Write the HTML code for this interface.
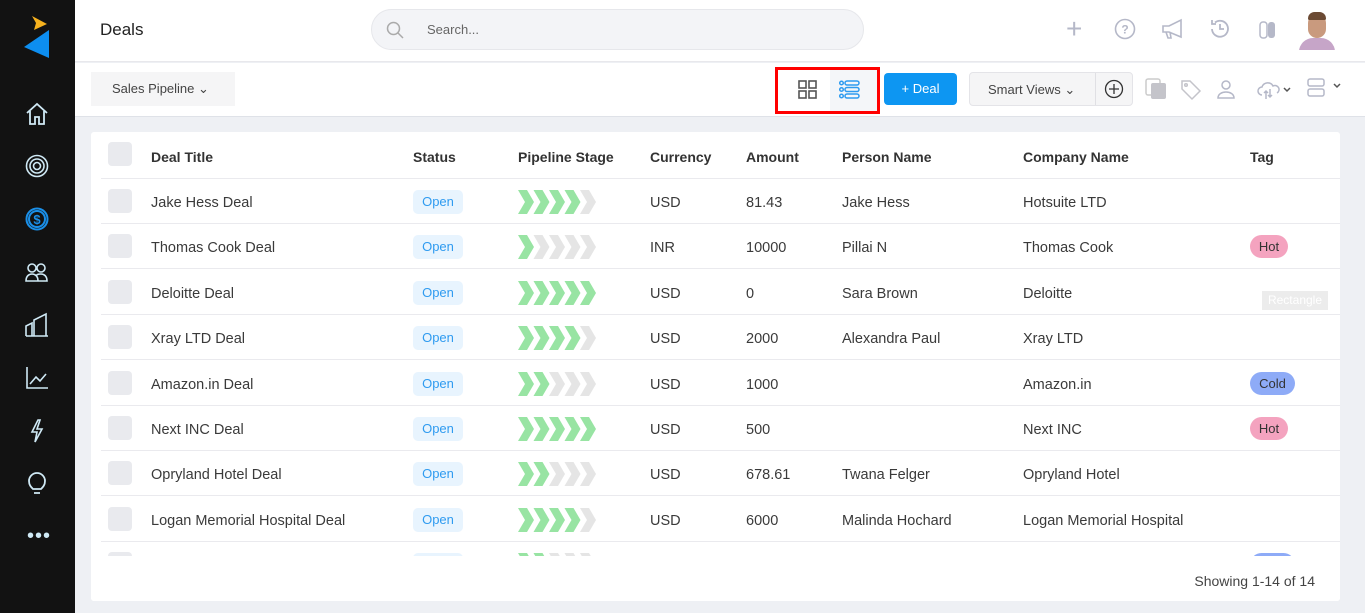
<!DOCTYPE html>
<html><head><meta charset="utf-8"><style>
*{box-sizing:border-box;margin:0;padding:0}
body{width:1365px;height:613px;overflow:hidden;font-family:"Liberation Sans",sans-serif;background:#eef0f4;position:relative;color:#333}
.sb{position:absolute;left:0;top:0;width:75px;height:613px;background:#121212}
.sb svg{position:absolute;left:24px}
.hdr{position:absolute;left:75px;top:0;right:0;height:62px;background:#fff;border-bottom:1px solid #e8e8ec}
.tb{position:absolute;left:75px;top:63px;right:0;height:54px;background:#fff;border-bottom:1px solid #dfe2e8}
.card{position:absolute;left:91px;top:132px;width:1249px;height:469px;background:#fff;border-radius:3px;overflow:hidden}
.row{position:absolute;left:10px;width:1239px;height:45px;border-bottom:1px solid #eaeaee;font-size:14.5px;color:#3a3a3a}
.row span{position:absolute;top:16px}
.cb{position:absolute;left:7px;top:10px;width:24px;height:24px;background:#e9eaee;border-radius:4px}
.st{position:absolute;left:312px;top:11px;width:50px;height:24px;background:#e8f4fe;border-radius:5px;color:#2f9bf0;font-size:13px;text-align:center;line-height:24px}
.pipe{position:absolute;left:417px;top:11px}
.tag{position:absolute;top:11px;height:23px;border-radius:12px;font-size:13px;line-height:23px;text-align:center;color:#333}
.th span{font-weight:bold;font-size:14px;color:#333}
</style></head><body>
<div class="sb">
<svg style="left:22px;top:14px" width="30" height="46" viewBox="0 0 30 46"><polygon points="10,2 25,10 12,16 14,9" fill="#f7b21e"/><polygon points="27,16 27,44 2,33" fill="#0d8ef0"/></svg>
<svg style="top:101px" width="26" height="26" viewBox="0 0 26 26" fill="none" stroke="#cfe9f5" stroke-width="1.8"><path d="M3 12L13 3l10 9M6 10v13h5v-7h4v7h5V10"/></svg>
<svg style="top:153px" width="26" height="26" viewBox="0 0 26 26" fill="none" stroke="#cfe9f5" stroke-width="1.6"><circle cx="13" cy="13" r="10.5"/><circle cx="13" cy="13" r="7"/><circle cx="13" cy="13" r="3.5"/></svg>
<svg style="top:206px" width="26" height="26" viewBox="0 0 26 26" fill="none" stroke="#1a8fe8" stroke-width="2"><circle cx="13" cy="13" r="10.5"/><circle cx="13" cy="13" r="8"/><text x="13" y="18" font-size="13" text-anchor="middle" fill="#1a8fe8" stroke="none" font-family="Liberation Sans" font-weight="bold">$</text></svg>
<svg style="top:259px" width="26" height="26" viewBox="0 0 26 26" fill="none" stroke="#cfe9f5" stroke-width="1.6"><circle cx="8" cy="9" r="4"/><circle cx="17" cy="9" r="4"/><path d="M2 22c0-5 3-7 6-7s6 2 6 7zM12 17c1-2 3-2 5-2 3 0 6 2 6 7H13"/></svg>
<svg style="top:312px" width="26" height="26" viewBox="0 0 26 26" fill="none" stroke="#cfe9f5" stroke-width="1.6"><path d="M2 24V14l6-3v13M10 24V8l12-6v22M2 24h22"/></svg>
<svg style="top:365px" width="26" height="26" viewBox="0 0 26 26" fill="none" stroke="#cfe9f5" stroke-width="1.6"><path d="M3 2v21h21M6 19l6-7 4 4 6-7"/></svg>
<svg style="top:418px" width="26" height="26" viewBox="0 0 26 26" fill="none" stroke="#cfe9f5" stroke-width="1.6"><path d="M14 2L8 14h5l-2 10 7-13h-5l3-9z"/></svg>
<svg style="top:471px" width="26" height="26" viewBox="0 0 26 26" fill="none" stroke="#cfe9f5" stroke-width="1.8"><path d="M9 18c-2-2-4-4-4-8a8 8 0 0116 0c0 4-2 6-4 8zM10 22h6"/></svg>
<div style="position:absolute;left:27px;top:533px;color:#cfe9f5;font-size:20px;letter-spacing:1px;line-height:6px">•••</div>
</div>
<div class="hdr">
<div style="position:absolute;left:25px;top:20px;font-size:17px;color:#222">Deals</div>
<div style="position:absolute;left:296px;top:9px;width:493px;height:41px;background:#f3f4f7;border:1px solid #e6e7eb;border-radius:21px">
<svg style="position:absolute;left:14px;top:11px" width="18" height="18" viewBox="0 0 18 18" fill="none" stroke="#aaa" stroke-width="1.5"><circle cx="7.5" cy="7.5" r="6"/><path d="M12 12l5 5"/></svg>
<span style="position:absolute;left:55px;top:12px;font-size:13px;color:#666">Search...</span></div>
<div style="position:absolute;left:991px;top:14px;font-size:28px;color:#b5b8c8;line-height:30px;font-weight:300">+</div>
<svg style="position:absolute;left:1039px;top:18px" width="22" height="22" viewBox="0 0 22 22" fill="none" stroke="#b5b8c8" stroke-width="1.6"><circle cx="11" cy="11" r="9.5"/><text x="11" y="15.5" font-size="12" text-anchor="middle" fill="#b5b8c8" stroke="none" font-family="Liberation Sans" font-weight="bold">?</text></svg>
<svg style="position:absolute;left:1086px;top:18px" width="24" height="22" viewBox="0 0 24 22" fill="none" stroke="#b5b8c8" stroke-width="1.6"><path d="M2 8h6l12-6v17L8 14H2zM5 14l2 6h3l-1-6"/></svg>
<svg style="position:absolute;left:1134px;top:18px" width="22" height="22" viewBox="0 0 22 22" fill="none" stroke="#b5b8c8" stroke-width="1.8"><path d="M3 11a8 8 0 103-6.5M3 2v4h4M11 6v5h4"/></svg>
<svg style="position:absolute;left:1184px;top:21px" width="17" height="18" viewBox="0 0 17 18"><rect x="1" y="1" width="7" height="16" rx="3" fill="none" stroke="#b5b8c8" stroke-width="1.5"/><rect x="9" y="1" width="7" height="16" rx="3" fill="#b5b8c8"/></svg>
<div style="position:absolute;left:1222px;top:12px;width:40px;height:38px;overflow:hidden;background:#fff">
<div style="position:absolute;left:11px;top:2px;width:18px;height:24px;border-radius:9px;background:#c99a7e"></div>
<div style="position:absolute;left:11px;top:0px;width:18px;height:8px;border-radius:9px 9px 2px 2px;background:#6b4a33"></div>
<div style="position:absolute;left:2px;top:26px;width:36px;height:20px;border-radius:14px 14px 0 0;background:#c6a5c8"></div></div>
</div>
<div class="tb">
<div style="position:absolute;left:16px;top:9px;width:144px;height:34px;background:#f5f5f6;font-size:13px;color:#444;line-height:34px;padding-left:21px">Sales Pipeline &#8964;</div>
<div style="position:absolute;left:700px;top:4px;width:105px;height:47px;border:3px solid #f00"></div>
<svg style="position:absolute;left:723px;top:17px" width="19" height="19" viewBox="0 0 19 19" fill="none" stroke="#555" stroke-width="1.6"><rect x="1" y="1" width="7" height="7"/><rect x="11" y="1" width="7" height="7"/><rect x="1" y="11" width="7" height="7"/><rect x="11" y="11" width="7" height="7"/></svg>
<div style="position:absolute;left:755px;top:7px;width:47px;height:41px;background:#f4f6f9"></div>
<svg style="position:absolute;left:764px;top:17px" width="21" height="19" viewBox="0 0 21 19" fill="none" stroke="#2f9bf0" stroke-width="1.5"><circle cx="2.5" cy="3" r="1.8"/><circle cx="2.5" cy="9.5" r="1.8"/><circle cx="2.5" cy="16" r="1.8"/><rect x="6" y="1" width="14" height="4" rx="2"/><rect x="6" y="7.5" width="14" height="4" rx="2"/><rect x="6" y="14" width="14" height="4" rx="2"/></svg>
<div style="position:absolute;left:809px;top:10px;width:73px;height:32px;background:#0d96f2;border-radius:4px;color:#fff;font-size:13px;text-align:center;line-height:32px">+ Deal</div>
<div style="position:absolute;left:894px;top:9px;width:164px;height:34px;background:#f5f5f6;border:1px solid #e4e4e8;border-radius:4px">
<span style="position:absolute;left:18px;top:9px;font-size:13px;color:#444">Smart Views &#8964;</span>
<div style="position:absolute;left:125px;top:0;width:1px;height:32px;background:#e0e0e4"></div>
<svg style="position:absolute;left:134px;top:6px" width="20" height="20" viewBox="0 0 20 20" fill="none" stroke="#333" stroke-width="1.3"><circle cx="10" cy="10" r="8.5"/><path d="M10 5v10M5 10h10"/></svg></div>
<svg style="position:absolute;left:1070px;top:15px" width="22" height="22"><rect x="1" y="1" width="14" height="16" rx="2" fill="none" stroke="#ccc" stroke-width="1.5"/><rect x="6" y="5" width="15" height="16" rx="2" fill="#c4c4ca"/></svg>
<svg style="position:absolute;left:1105px;top:16px" width="22" height="22" viewBox="0 0 22 22" fill="none" stroke="#c4c4ca" stroke-width="1.5"><path d="M2 2h8l10 10-8 8L2 10zM4 12l8 8"/><circle cx="6" cy="6" r="1.3"/></svg>
<svg style="position:absolute;left:1141px;top:16px" width="20" height="20" viewBox="0 0 20 20" fill="none" stroke="#b5b8c8" stroke-width="1.5"><circle cx="10" cy="6" r="4"/><path d="M2 19c0-4 4-6 8-6s8 2 8 6z"/></svg>
<svg style="position:absolute;left:1182px;top:16px" width="36" height="22" viewBox="0 0 36 22" fill="none" stroke="#b5b8c8" stroke-width="1.5"><path d="M5 16a4 4 0 010-8 6 6 0 0111-1 4 4 0 014 7M9 12v8M7 14l2-2 2 2M13 10v8M11 16l2 2 2-2"/><path d="M27 9l3 3 3-3" stroke="#555"/></svg>
<svg style="position:absolute;left:1232px;top:15px" width="40" height="22" viewBox="0 0 40 22" fill="none" stroke="#b5b8c8" stroke-width="1.5"><rect x="1" y="1" width="16" height="7" rx="2"/><rect x="1" y="11" width="16" height="7" rx="2"/><path d="M27 6l3 3 3-3" stroke="#555"/></svg>
</div>
<div class="card">
<div class="row th" style="top:0;height:47px"><div class="cb"></div><span style="left:50px;top:17px">Deal Title</span><span style="left:312px;top:17px">Status</span><span style="left:417px;top:17px">Pipeline Stage</span><span style="left:549px;top:17px">Currency</span><span style="left:645px;top:17px">Amount</span><span style="left:741px;top:17px">Person Name</span><span style="left:922px;top:17px">Company Name</span><span style="left:1149px;top:17px">Tag</span></div>
<div id="rows"></div>
<div style="position:absolute;right:25px;top:441px;font-size:14px;color:#444">Showing 1-14 of 14</div>
</div>
<div style="position:absolute;left:1262px;top:291px;width:66px;height:19px;background:#ececec;color:#fff;font-size:12px;text-align:center;line-height:19px">Rectangle</div>
<script>
var d=[["Jake Hess Deal","USD","81.43","Jake Hess","Hotsuite LTD",4,""],["Thomas Cook Deal","INR","10000","Pillai N","Thomas Cook",1,"Hot"],["Deloitte Deal","USD","0","Sara Brown","Deloitte",5,""],["Xray LTD Deal","USD","2000","Alexandra Paul","Xray LTD",4,""],["Amazon.in Deal","USD","1000","","Amazon.in",2,"Cold"],["Next INC Deal","USD","500","","Next INC",5,"Hot"],["Opryland Hotel Deal","USD","678.61","Twana Felger","Opryland Hotel",2,""],["Logan Memorial Hospital Deal","USD","6000","Malinda Hochard","Logan Memorial Hospital",4,""],["","","","","",2,"Cold"]];
var h="";d.forEach(function(r,i){var t=47+i*45.4;var p='<svg class="pipe" width="80" height="24">';for(var k=0;k<5;k++){var x=k*15.5;p+='<polygon points="'+x+',0 '+(x+9)+',0 '+(x+16)+',12 '+(x+9)+',24 '+x+',24 '+(x+7)+',12" fill="'+(k<r[5]?'#98e4a3':'#e5e5e5')+'"/>';}p+='</svg>';
var tg="";if(r[6]=="Hot")tg='<div class="tag" style="left:1149px;width:38px;background:#f4a3bf">Hot</div>';if(r[6]=="Cold")tg='<div class="tag" style="left:1149px;width:45px;background:#8eabf7">Cold</div>';
h+='<div class="row" style="top:'+t+'px"><div class="cb"></div><span style="left:50px">'+r[0]+'</span><div class="st">Open</div>'+p+'<span style="left:549px">'+r[1]+'</span><span style="left:645px">'+r[2]+'</span><span style="left:741px">'+r[3]+'</span><span style="left:922px">'+r[4]+'</span>'+tg+'</div>';});
h+='<div style="position:absolute;left:0;top:424px;width:1249px;height:45px;background:#fff"></div>';
document.getElementById("rows").innerHTML=h;
</script>
</body></html>
